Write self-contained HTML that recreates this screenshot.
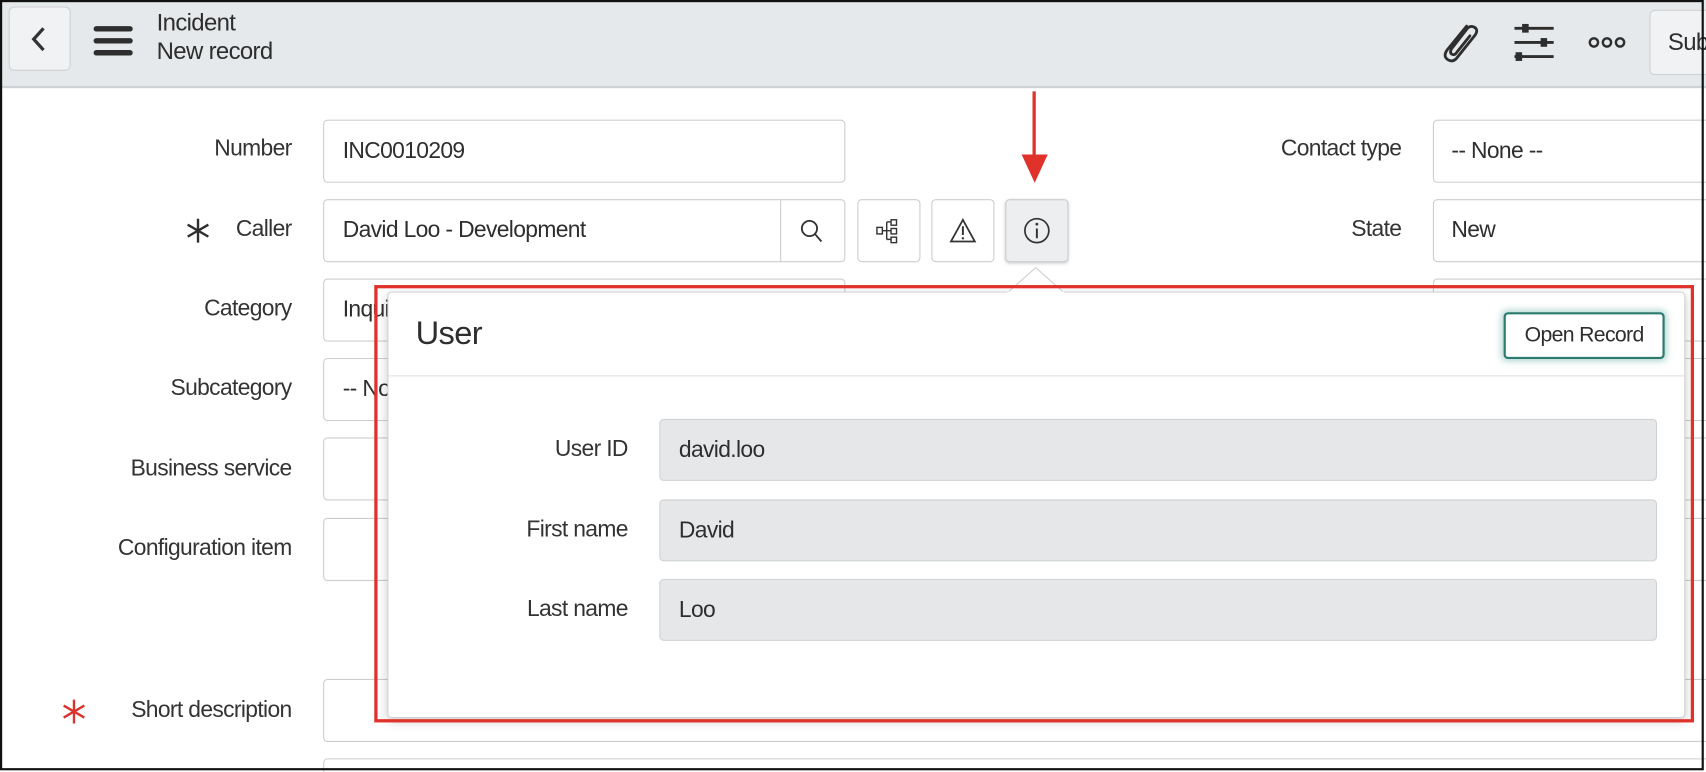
<!DOCTYPE html>
<html><head><meta charset="utf-8"><style>
html,body{margin:0;padding:0;width:1706px;height:772px;overflow:hidden;background:#fff}
#s{position:absolute;left:0;top:0;width:1568px;height:710px;transform:scale(1.088);transform-origin:0 0;font-family:"Liberation Sans",sans-serif;color:#2e2e2e;overflow:hidden}
.a{position:absolute}
.lbl{position:absolute;font-size:21px;text-align:right;letter-spacing:-0.6px;color:#333}
.f{position:absolute;border:1px solid #cdcdcd;border-radius:4px;background:#fff;box-sizing:border-box;font-size:21px;letter-spacing:-0.6px;padding-left:17px;display:flex;align-items:center;overflow:hidden;white-space:nowrap}
.btn{position:absolute;border:1px solid #cdcdcd;border-radius:4px;background:#fff;box-sizing:border-box;width:58px;height:58px;top:183px}
.pf{position:absolute;left:606px;width:917px;height:57px;background:#e5e7e9;border:1px solid #cfd1d3;border-radius:4px;box-sizing:border-box;font-size:21px;padding-left:17px;display:flex;align-items:center;letter-spacing:-0.6px}
.pl{position:absolute;right:991px;font-size:21px;letter-spacing:-0.6px;color:#333}
</style></head><body><div id="s">
<!-- header -->
<div class="a" style="left:0;top:0;width:1568px;height:79px;background:#e6e9eb;border-bottom:2px solid #cfd2d4"></div>
<div class="a" style="left:8px;top:6px;width:57px;height:59px;background:#f1f2f3;border:1px solid #cfd2d4;border-radius:5px;box-sizing:border-box"></div>
<svg class="a" style="left:26px;top:22px" width="20" height="28"><path d="M14 4 L5 14 L14 24" stroke="#333" stroke-width="3" fill="none"/></svg>
<div class="a" style="left:86px;top:24px;width:36px;height:5px;background:#2e2e2e;border-radius:3px"></div>
<div class="a" style="left:86px;top:35px;width:36px;height:5px;background:#2e2e2e;border-radius:3px"></div>
<div class="a" style="left:86px;top:46px;width:36px;height:5px;background:#2e2e2e;border-radius:3px"></div>
<div class="a" style="left:144px;top:8px;font-size:22px;letter-spacing:-0.6px">Incident</div>
<div class="a" style="left:144px;top:34px;font-size:22px;letter-spacing:-0.6px">New record</div>
<svg class="a" style="left:1320px;top:16px" width="44" height="44"><path d="M28 8 L10 30 Q6 36 11 39 Q16 42 20 36 L36 16 Q39 11 35 9 Q31 7 28 11 L14 29 Q12 33 15 34 Q17 35 19 32 L31 17" stroke="#2e2e2e" stroke-width="2.6" fill="none" stroke-linecap="round"/></svg>
<svg class="a" style="left:1388px;top:18px" width="44" height="42"><g stroke="#2e2e2e" stroke-width="2.6"><line x1="4" y1="8" x2="40" y2="8"/><line x1="4" y1="21" x2="40" y2="21"/><line x1="4" y1="34" x2="40" y2="34"/></g><rect x="11" y="4" width="6" height="8" fill="#2e2e2e"/><rect x="28" y="17" width="6" height="8" fill="#2e2e2e"/><rect x="5" y="30" width="6" height="8" fill="#2e2e2e"/></svg>
<svg class="a" style="left:1459px;top:32px" width="38" height="14"><g stroke="#2e2e2e" stroke-width="2.2" fill="none"><circle cx="6" cy="7" r="3.8"/><circle cx="18" cy="7" r="3.8"/><circle cx="30" cy="7" r="3.8"/></g></svg>
<div class="a" style="left:1516px;top:9px;width:80px;height:60px;background:#f1f2f3;border:1px solid #cfd2d4;border-radius:5px;box-sizing:border-box;font-size:22px;letter-spacing:-0.6px;padding:16px 0 0 16px">Submit</div>

<!-- left form -->
<div class="lbl" style="right:1300px;top:125px">Number</div>
<div class="f" style="left:297px;top:110px;width:480px;height:58px">INC0010209</div>
<svg class="a" style="left:170px;top:200px" width="24" height="24"><g stroke="#2e2e2e" stroke-width="2.2"><line x1="12" y1="1" x2="12" y2="23"/><line x1="2.5" y1="6.5" x2="21.5" y2="17.5"/><line x1="2.5" y1="17.5" x2="21.5" y2="6.5"/></g></svg>
<div class="lbl" style="right:1300px;top:199px">Caller</div>
<div class="f" style="left:297px;top:183px;width:480px;height:58px">David Loo - Development</div>
<div class="a" style="left:717px;top:184px;width:1px;height:56px;background:#cdcdcd"></div>
<svg class="a" style="left:733px;top:199px" width="28" height="28"><circle cx="11" cy="11" r="7" stroke="#333" stroke-width="1.7" fill="none"/><line x1="16" y1="16" x2="22" y2="23" stroke="#333" stroke-width="1.7"/></svg>
<div class="btn" style="left:788px"></div>
<svg class="a" style="left:803px;top:199px" width="28" height="28"><g stroke="#333" stroke-width="1.3" fill="none"><rect x="3" y="10" width="5" height="6"/><rect x="16" y="3" width="5" height="5"/><rect x="16" y="11" width="5" height="5"/><rect x="16" y="19" width="5" height="5"/><path d="M8 13 H12 M12 5 V21 M12 5 H16 M12 13 H16 M12 21 H16"/></g></svg>
<div class="btn" style="left:856px"></div>
<svg class="a" style="left:871px;top:198px" width="28" height="28"><path d="M14 4 L25 24 H3 Z" stroke="#333" stroke-width="1.6" fill="none"/><line x1="14" y1="10" x2="14" y2="18" stroke="#333" stroke-width="1.8"/><circle cx="14" cy="21" r="1.1" fill="#333"/></svg>
<div class="btn" style="left:924px;background:#eceeef;box-shadow:0 1px 3px rgba(0,0,0,.2)"></div>
<svg class="a" style="left:939px;top:198px" width="28" height="28"><circle cx="14" cy="14" r="11" stroke="#333" stroke-width="1.6" fill="none"/><line x1="14" y1="12" x2="14" y2="21" stroke="#333" stroke-width="1.8"/><circle cx="14" cy="8" r="1.3" fill="#333"/></svg>

<div class="lbl" style="right:1300px;top:272px">Category</div>
<div class="f" style="left:297px;top:256px;width:480px;height:58px">Inquiry / Help</div>
<div class="lbl" style="right:1300px;top:345px">Subcategory</div>
<div class="f" style="left:297px;top:329px;width:480px;height:58px">-- None --</div>
<div class="lbl" style="right:1300px;top:419px">Business service</div>
<div class="f" style="left:297px;top:402px;width:480px;height:58px"></div>
<div class="lbl" style="right:1300px;top:492px">Configuration item</div>
<div class="f" style="left:297px;top:476px;width:480px;height:58px"></div>
<svg class="a" style="left:56px;top:642px" width="24" height="24"><g stroke="#d9342b" stroke-width="2.2"><line x1="12" y1="1" x2="12" y2="23"/><line x1="2.5" y1="6.5" x2="21.5" y2="17.5"/><line x1="2.5" y1="17.5" x2="21.5" y2="6.5"/></g></svg>
<div class="lbl" style="right:1300px;top:641px">Short description</div>
<div class="f" style="left:297px;top:624px;width:1280px;height:58px"></div>
<div class="f" style="left:297px;top:697px;width:1280px;height:40px"></div>

<!-- right form -->
<div class="lbl" style="right:280px;top:125px">Contact type</div>
<div class="f" style="left:1317px;top:110px;width:260px;height:58px;padding-left:16px">-- None --</div>
<div class="lbl" style="right:280px;top:199px">State</div>
<div class="f" style="left:1317px;top:183px;width:260px;height:58px;padding-left:16px">New</div>
<div class="f" style="left:1317px;top:256px;width:260px;height:58px"></div>
<div class="f" style="left:1317px;top:329px;width:260px;height:58px"></div>
<div class="f" style="left:1317px;top:402px;width:260px;height:58px"></div>
<div class="f" style="left:1317px;top:476px;width:260px;height:58px"></div>

<!-- arrow -->
<div class="a" style="left:949px;top:84px;width:3px;height:62px;background:#e0312b"></div>
<svg class="a" style="left:937px;top:140px" width="28" height="30"><path d="M2 2 H26 L14 28 Z" fill="#e0312b"/></svg>

<!-- popover -->
<div class="a" style="left:356px;top:268px;width:1193px;height:392px;background:#fff;border:1px solid #d3d3d3;border-radius:4px;box-sizing:border-box;box-shadow:0 3px 10px rgba(0,0,0,.2)"></div>
<svg class="a" style="left:926px;top:245px" width="52" height="25"><path d="M0 24 L26 1 L52 24" fill="#fff" stroke="#cfcfcf" stroke-width="1"/><rect x="0" y="23" width="52" height="3" fill="#fff"/></svg>
<div class="a" style="left:382px;top:290px;font-size:30px;letter-spacing:-0.6px">User</div>
<div class="a" style="left:1382px;top:287px;width:148px;height:43px;border:2px solid #2b7a6e;border-radius:4px;box-sizing:border-box;box-shadow:0 0 6px 2px rgba(43,140,125,.35);font-size:19.5px;letter-spacing:-0.6px;text-align:center;line-height:38px;background:#fff">Open Record</div>
<div class="a" style="left:357px;top:345px;width:1191px;height:1px;background:#e0e0e0"></div>
<div class="pl" style="top:401px">User ID</div>
<div class="pf" style="top:385px">david.loo</div>
<div class="pl" style="top:475px">First name</div>
<div class="pf" style="top:459px">David</div>
<div class="pl" style="top:548px">Last name</div>
<div class="pf" style="top:532px">Loo</div>

<!-- red highlight -->
<div class="a" style="left:344px;top:262px;width:1213px;height:402px;border:3px solid #e0312b;box-sizing:border-box"></div>

<!-- outer frame -->
<div class="a" style="left:0;top:0;width:1566px;height:708px;border:2px solid #111;box-sizing:border-box"></div>
</div></body></html>
